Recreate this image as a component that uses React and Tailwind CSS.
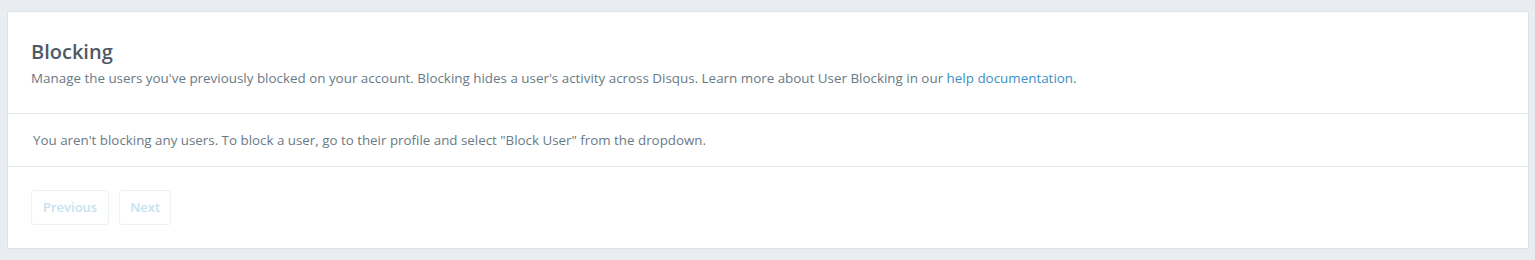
import React from 'react';

const App = () => {
    return (
        <div className="h-[260px] bg-[#e9ecf1] pt-[11px] pl-[7px] pr-[6px]" style={{ fontFamily: '"Open Sans", "Liberation Sans", sans-serif' }}>
            <div className="bg-white border border-[#dfe3e8] rounded-[2px]">
                {/* header */}
                <div className="h-[102px] px-[23px] pt-[28px] border-b border-[#e8ebee]">
                    <h1 className="text-[20px] leading-[24px] font-semibold text-[#4e5a65]">Blocking</h1>
                    <p className="mt-[5px] text-[13.4px] leading-[18px] text-[#687a86]">
                        Manage the users you've previously blocked on your account. Blocking hides a user's activity across Disqus. Learn more about User Blocking in our{' '}
                        <a href="#" className="text-[#3a91c5]">help documentation</a>.
                    </p>
                </div>
                {/* body */}
                <div className="h-[53px] px-[25px] flex items-center border-b border-[#e8ebee]">
                    <p className="text-[13.35px] text-[#687a86]">You aren't blocking any users. To block a user, go to their profile and select "Block User" from the dropdown.</p>
                </div>
                {/* pagination */}
                <div className="h-[81px] px-[23px] pt-[23px] flex gap-[10px]">
                    <button type="button" className="h-[35px] px-[11px] border border-[#edf1f4] rounded-[3px] text-[13px] font-semibold text-[#c5e1f0]">Previous</button>
                    <button type="button" className="h-[35px] px-[10px] border border-[#edf1f4] rounded-[3px] text-[13px] font-semibold text-[#c5e1f0]">Next</button>
                </div>
            </div>
        </div>
    );
};

export default App;
